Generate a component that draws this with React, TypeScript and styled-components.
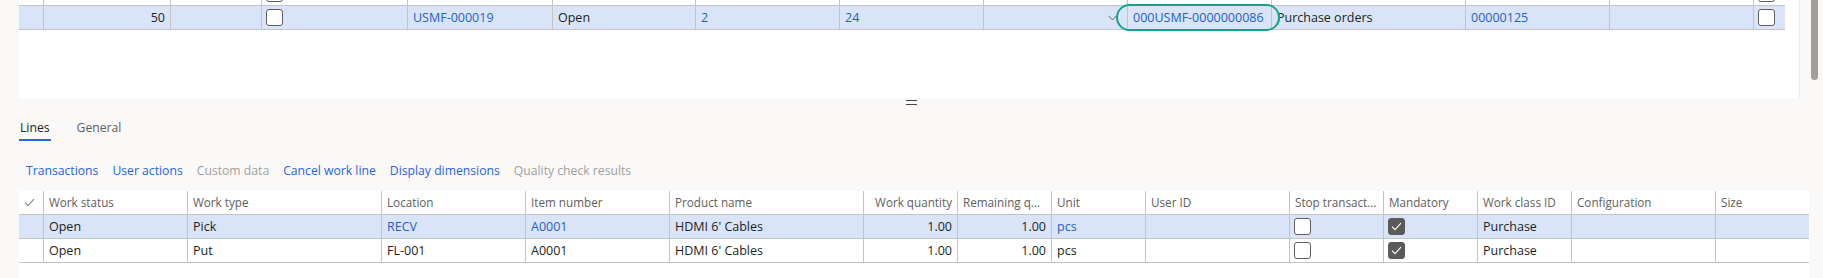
import React from "react";
import styled, { createGlobalStyle } from "styled-components";

const GlobalStyle = createGlobalStyle`
  html, body { margin: 0; padding: 0; background: #faf9f8; }
  body { font-family: "Open Sans", "Noto Sans", sans-serif; color: #201f1e; }
  * { box-sizing: border-box; }
`;

const Page = styled.div`
  width: 1823px;
  height: 278px;
  overflow: hidden;
  background: #faf9f8;
  display: flex;
  flex-direction: column;
`;

const TopArea = styled.div`
  display: flex;
  height: 98px;
  flex: none;
`;

const Gutter = styled.div`
  width: 19px;
  flex: none;
`;

const TopPanel = styled.div`
  width: 1780px;
  height: 98px;
  background: #ffffff;
  overflow: hidden;
  flex: none;
`;

const GridBody = styled.div`
  margin-top: -18px;
  width: 1766px;
`;

const Row = styled.div<{ $selected?: boolean }>`
  display: flex;
  height: 24px;
  border-bottom: 1px solid #c4c4c4;
  background: ${(p) => (p.$selected ? "#d9e4f8" : "transparent")};
`;

const Cell = styled.div<{ $w: number; $align?: "left" | "right"; $last?: boolean }>`
  position: relative;
  width: ${(p) => p.$w}px;
  flex: none;
  height: 23px;
  padding: 0 5px;
  border-right: ${(p) => (p.$last ? "none" : "1px solid #c4c4c4")};
  display: flex;
  align-items: center;
  justify-content: ${(p) => (p.$align === "right" ? "flex-end" : "flex-start")};
  font-size: 12.5px;
  line-height: 23px;
  white-space: nowrap;
`;

const CheckCell = styled(Cell)`
  padding: 0 4px;
`;

const LinkText = styled.span`
  color: #1f5fc8;
`;

const PlainText = styled.span`
  color: #201f1e;
`;

const Checkbox = styled.span<{ $checked?: boolean }>`
  width: 17px;
  height: 17px;
  border-radius: 3px;
  border: 1px solid ${(p) => (p.$checked ? "#5c5a58" : "#605e5c")};
  background: ${(p) => (p.$checked ? "#5c5a58" : "#ffffff")};
  display: inline-flex;
  align-items: center;
  justify-content: center;
  flex: none;
`;

const Oval = styled.span`
  position: absolute;
  left: -12px;
  top: -2px;
  width: 164px;
  height: 27px;
  border: 2.5px solid #17a388;
  border-radius: 14px;
  pointer-events: none;
  z-index: 2;
`;

const Chevron = styled.svg`
  width: 9px;
  height: 6px;
  margin-right: 5px;
`;

const ScrollTrack = styled.div`
  flex: 1;
  border-left: 1px solid #ecebea;
  padding-left: 11px;
`;

const Thumb = styled.div`
  width: 7px;
  height: 80px;
  background: #a19f9d;
  border-radius: 0 0 4px 4px;
`;

const Lower = styled.div`
  flex: 1;
  display: flex;
  flex-direction: column;
  padding-left: 19px;
`;

const Splitter = styled.div`
  height: 12px;
  display: flex;
  justify-content: center;
  padding-right: 19px;
  padding-top: 2px;
`;

const SplitHandle = styled.div`
  width: 11px;
  height: 5px;
  border-top: 1px solid #484644;
  border-bottom: 1px solid #484644;
`;

const TabList = styled.div`
  display: flex;
  gap: 25px;
`;

const Tab = styled.div<{ $active?: boolean }>`
  padding: 8px 1px 1px 1px;
  line-height: 20px;
  font-size: 12.2px;
  color: ${(p) => (p.$active ? "#201f1e" : "#605e5c")};
  border-bottom: 2px solid ${(p) => (p.$active ? "#2266e3" : "transparent")};
`;

const Toolbar = styled.div`
  display: flex;
  gap: 14px;
  padding: 20px 0 10px 7px;
  line-height: 20px;
  font-size: 12.2px;
`;

const ToolButton = styled.span<{ $disabled?: boolean }>`
  color: ${(p) => (p.$disabled ? "#a19f9d" : "#2563e0")};
  white-space: nowrap;
`;

const LowerGrid = styled.div`
  flex: 1;
  width: 1790px;
  background: #ffffff;
`;

const HeaderCell = styled(Cell)`
  font-size: 11.7px;
  color: #605e5c;
`;

const CheckIcon = ({ color }: { color: string }) => (
  <svg width="11" height="9" viewBox="0 0 11 9">
    <path d="M1 4.6 L4 7.6 L10 1.2" fill="none" stroke={color} strokeWidth="1.1" />
  </svg>
);

type TopCol = { w: number; content?: React.ReactNode; align?: "left" | "right"; check?: boolean };

const topWidths = [25, 127, 91, 146, 145, 143, 144, 144, 144, 144, 194, 144, 144, 31];

const prevRow: TopCol[] = topWidths.map((w, i) => ({ w, check: i === 3 || i === 13 }));

const selRow: TopCol[] = [
  { w: 25 },
  { w: 127, align: "right", content: <PlainText>50</PlainText> },
  { w: 91 },
  { w: 146, check: true },
  { w: 145, content: <LinkText>USMF-000019</LinkText> },
  { w: 143, content: <PlainText>Open</PlainText> },
  { w: 144, content: <LinkText>2</LinkText> },
  { w: 144, content: <LinkText>24</LinkText> },
  {
    w: 144,
    align: "right",
    content: (
      <Chevron viewBox="0 0 9 6">
        <path d="M0.5 0.8 L4.5 4.8 L8.5 0.8" fill="none" stroke="#605e5c" strokeWidth="1" />
      </Chevron>
    ),
  },
  {
    w: 144,
    content: (
      <>
        <Oval />
        <LinkText>000USMF-0000000086</LinkText>
      </>
    ),
  },
  { w: 194, content: <PlainText>Purchase orders</PlainText> },
  { w: 144, content: <LinkText>00000125</LinkText> },
  { w: 144 },
  { w: 31, check: true },
];

type LCol = { title: string; w: number; align?: "left" | "right" };

const lowerCols: LCol[] = [
  { title: "", w: 25 },
  { title: "Work status", w: 144 },
  { title: "Work type", w: 194 },
  { title: "Location", w: 144 },
  { title: "Item number", w: 144 },
  { title: "Product name", w: 194 },
  { title: "Work quantity", w: 94, align: "right" },
  { title: "Remaining q...", w: 94 },
  { title: "Unit", w: 94 },
  { title: "User ID", w: 144 },
  { title: "Stop transact...", w: 94 },
  { title: "Mandatory", w: 94 },
  { title: "Work class ID", w: 94 },
  { title: "Configuration", w: 144 },
  { title: "Size", w: 84 },
];

type LineData = {
  status: string;
  type: string;
  location: string;
  item: string;
  product: string;
  qty: string;
  remaining: string;
  unit: string;
  workClass: string;
  selected: boolean;
};

const lines: LineData[] = [
  {
    status: "Open",
    type: "Pick",
    location: "RECV",
    item: "A0001",
    product: "HDMI 6' Cables",
    qty: "1.00",
    remaining: "1.00",
    unit: "pcs",
    workClass: "Purchase",
    selected: true,
  },
  {
    status: "Open",
    type: "Put",
    location: "FL-001",
    item: "A0001",
    product: "HDMI 6' Cables",
    qty: "1.00",
    remaining: "1.00",
    unit: "pcs",
    workClass: "Purchase",
    selected: false,
  },
];

const TopRow = ({ cols, selected }: { cols: TopCol[]; selected?: boolean }) => (
  <Row $selected={selected}>
    {cols.map((c, i) =>
      c.check ? (
        <CheckCell key={i} $w={c.w} $last={i === cols.length - 1}>
          <Checkbox />
        </CheckCell>
      ) : (
        <Cell key={i} $w={c.w} $align={c.align} $last={i === cols.length - 1}>
          {c.content}
        </Cell>
      )
    )}
  </Row>
);

const LineRow = ({ d }: { d: LineData }) => {
  const T = d.selected ? LinkText : PlainText;
  return (
    <Row $selected={d.selected}>
      <Cell $w={25} />
      <Cell $w={144}><PlainText>{d.status}</PlainText></Cell>
      <Cell $w={194}><PlainText>{d.type}</PlainText></Cell>
      <Cell $w={144}><T>{d.location}</T></Cell>
      <Cell $w={144}><T>{d.item}</T></Cell>
      <Cell $w={194}><PlainText>{d.product}</PlainText></Cell>
      <Cell $w={94} $align="right"><PlainText>{d.qty}</PlainText></Cell>
      <Cell $w={94} $align="right"><PlainText>{d.remaining}</PlainText></Cell>
      <Cell $w={94}><T>{d.unit}</T></Cell>
      <Cell $w={144} />
      <CheckCell $w={94}><Checkbox /></CheckCell>
      <CheckCell $w={94}>
        <Checkbox $checked>
          <CheckIcon color="#ffffff" />
        </Checkbox>
      </CheckCell>
      <Cell $w={94}><PlainText>{d.workClass}</PlainText></Cell>
      <Cell $w={144} />
      <Cell $w={84} $last />
    </Row>
  );
};

export default function App() {
  return (
    <>
      <GlobalStyle />
      <Page>
        <TopArea>
          <Gutter />
          <TopPanel>
            <GridBody>
              <TopRow cols={prevRow} />
              <TopRow cols={selRow} selected />
            </GridBody>
          </TopPanel>
          <ScrollTrack>
            <Thumb />
          </ScrollTrack>
        </TopArea>
        <Lower>
          <Splitter>
            <SplitHandle />
          </Splitter>
          <TabList>
            <Tab $active>Lines</Tab>
            <Tab>General</Tab>
          </TabList>
          <Toolbar>
            <ToolButton>Transactions</ToolButton>
            <ToolButton>User actions</ToolButton>
            <ToolButton $disabled>Custom data</ToolButton>
            <ToolButton>Cancel work line</ToolButton>
            <ToolButton>Display dimensions</ToolButton>
            <ToolButton $disabled>Quality check results</ToolButton>
          </Toolbar>
          <LowerGrid>
            <Row>
              {lowerCols.map((c, i) => (
                <HeaderCell key={i} $w={c.w} $align={c.align} $last={i === lowerCols.length - 1}>
                  {i === 0 ? <CheckIcon color="#8a8886" /> : c.title}
                </HeaderCell>
              ))}
            </Row>
            {lines.map((d, i) => (
              <LineRow key={i} d={d} />
            ))}
          </LowerGrid>
        </Lower>
      </Page>
    </>
  );
}
